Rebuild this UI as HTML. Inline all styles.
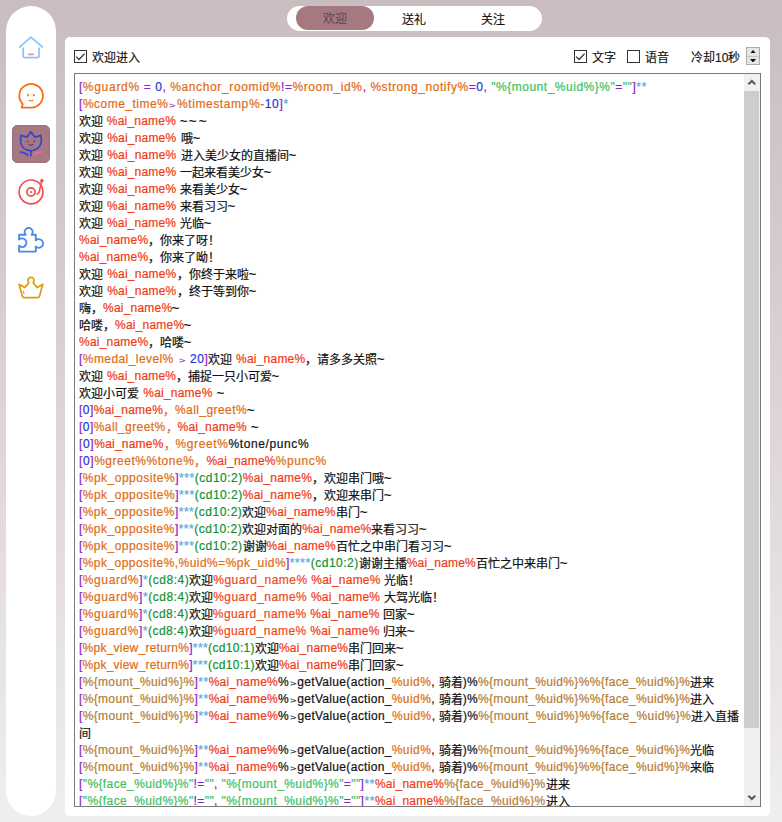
<!DOCTYPE html>
<html lang="zh-CN"><head><meta charset="utf-8">
<style>
html,body{margin:0;padding:0;}
body{width:782px;height:822px;overflow:hidden;position:relative;
 background:linear-gradient(to bottom,#c9bdc0 0%,#ddd4d6 50%,#f0eeee 100%);
 font-family:"Liberation Sans",sans-serif;color:#111;}
.side{position:absolute;left:6px;top:6px;width:50px;height:810px;border-radius:25px;background:#fff;}
.ico{position:absolute;left:0;width:50px;height:48px;}
.ico svg{position:absolute;left:13px;top:12px;width:24px;height:24px;overflow:visible}
.sel{position:absolute;left:6px;top:119px;width:36px;height:36px;border-radius:5px;background:#a67880;border:1px solid #9f717a}
.tabs{position:absolute;left:287px;top:6px;width:255px;height:25px;border-radius:12.5px;background:#fff;}
.tab{position:absolute;top:1px;height:25px;line-height:26px;font-size:12px;text-align:center;color:#111;-webkit-text-stroke:0.15px currentColor}
.tab.act{background:#a67880;border-radius:12px;top:0;height:24px;line-height:27px;color:#55465a;-webkit-text-stroke:0}
.panel{position:absolute;left:65px;top:37px;width:705px;height:779px;border-radius:5px;background:#fff;}
.cb{position:absolute;width:11px;height:11px;border:1px solid #333;background:#fff;}
.cb svg{position:absolute;left:0;top:0}
.lbl{position:absolute;font-size:12px;line-height:16px;white-space:nowrap;color:#111;-webkit-text-stroke:0.15px #111}
.ta{position:absolute;left:9px;top:36px;width:685px;height:732px;border:1px solid #7a7a7a;background:#fff;overflow:hidden}
.txt{position:absolute;left:4px;top:5px;width:665px;font-size:12px;line-height:17px;}
.ln{white-space:nowrap;height:17px;letter-spacing:0px}
.ln b.t{font-weight:normal;margin-right:2px;display:inline-block;transform:scale(1.1,1.15)}
.ln b.gt{font-weight:normal;display:inline-block;transform:translate(0.6px,1px) scale(0.9,0.66);margin-right:1px}
.ln i{font-style:normal;letter-spacing:0;position:relative;top:1px}
.sb{position:absolute;left:669px;top:0;width:16px;height:732px;background:#f0f0f0}
.thumb{position:absolute;left:0;top:17px;width:15px;height:637px;background:#cdcdcd}
.p{color:#8c22c8}.o{color:#de6c14}.r{color:#f03a14}.r2{color:#ec4a1c}.b{color:#1c34d8}.g{color:#40c064}.d{color:#109030}.l{color:#58a8d8}.y{color:#b47c34}.k{color:#111}
.ln span{-webkit-text-stroke:0.2px currentColor}
.spin{position:absolute;left:681px;top:10px;width:12px;height:16px;border:1px solid #adadad;background:#e6e6e6}
</style></head><body>
<div class="side">
 <div class="ico" style="top:18px">
  <svg viewBox="0 0 24 24"><path d="M0.7 11 L12 1.1 L23.3 11" fill="none" stroke="#8cc4fa" stroke-width="1.75" stroke-linejoin="round" stroke-linecap="round"/><path d="M4.2 11.6 V19.8 Q4.2 21.5 5.9 21.5 H18.3 Q20 21.5 20 19.8 V11.6" fill="none" stroke="#8cc4fa" stroke-width="1.75"/><path d="M9.6 18.4 H14.4" stroke="#f48aaa" stroke-width="1.6" stroke-linecap="round"/></svg>
 </div>
 <div class="ico" style="top:66px">
  <svg viewBox="0 0 24 24"><path d="M12.15 23.55 H2.6 L3.8 20.1 A11.8 11.8 0 1 1 12.15 23.55 Z" fill="none" stroke="#fa6a10" stroke-width="1.75" stroke-linejoin="round"/><ellipse cx="9.1" cy="11.2" rx="0.8" ry="1.4" fill="#fa6a10"/><ellipse cx="14.9" cy="11.2" rx="0.8" ry="1.4" fill="#fa6a10"/><path d="M10 16.3 Q12 17.6 14 16.3" fill="none" stroke="#fa6a10" stroke-width="1.1" stroke-linecap="round"/></svg>
 </div>
 <div class="sel"></div>
 <div class="ico" style="top:114px">
  <svg viewBox="0 0 24 24"><path d="M11.8 18.6 V24.4" stroke="#3a44d4" stroke-width="1.75"/><path d="M11.8 -0.3 L15.9 5.1 L21.9 3.4 C22.4 6 22.4 8 22.2 10 C21.5 15 17.5 18.6 11.8 18.6 C6.1 18.6 2.3 15 1.7 10 C1.5 8 1.5 6 1.9 3.4 L8.1 5.1 Z" fill="none" stroke="#3a44d4" stroke-width="1.75" stroke-linejoin="round"/><ellipse cx="8.7" cy="9.4" rx="0.8" ry="1.1" fill="#3a44d4"/><ellipse cx="15.3" cy="9.4" rx="0.8" ry="1.1" fill="#3a44d4"/><path d="M10.1 12.4 Q12 14.4 13.9 12.4" fill="none" stroke="#3a44d4" stroke-width="1.3" stroke-linecap="round"/><path d="M1.3 20.1 Q6 20.3 8.7 23.2" fill="none" stroke="#3a44d4" stroke-width="1.75" stroke-linecap="round"/><path d="M14.7 23.2 Q17.5 20.3 22.7 19.9" fill="none" stroke="#f06c94" stroke-width="1.75" stroke-linecap="round"/></svg>
 </div>
 <div class="ico" style="top:162px">
  <svg viewBox="0 0 24 24"><circle cx="12.05" cy="11.9" r="11.9" fill="none" stroke="#f24c4c" stroke-width="1.7"/><circle cx="12" cy="12" r="4.1" fill="none" stroke="#f24c4c" stroke-width="1.7"/><circle cx="12" cy="12" r="1" fill="#f24c4c"/><path d="M22.9 0.7 L21.5 5.7 L20.3 12 L18 14.3" fill="none" stroke="#f24c4c" stroke-width="1.5" stroke-linecap="round" stroke-linejoin="round"/><circle cx="22.9" cy="0.7" r="1.8" fill="#f24c4c"/></svg>
 </div>
 <div class="ico" style="top:210px">
  <svg viewBox="0 0 24 24"><path d="M0.1 6.7 H6.7 A4 4 0 1 1 12.6 6.7 H16.8 V12.3 A4.3 4.3 0 1 1 16.8 18.6 V23.6 H0.1 V17.8 A4.3 4.3 0 1 0 0.1 11.6 Z" fill="none" stroke="#4a88ea" stroke-width="1.9" stroke-linejoin="round"/></svg>
 </div>
 <div class="ico" style="top:258px">
  <svg viewBox="0 0 24 24"><path d="M0.1 8.3 L5.6 11.6 L9.9 6.8 A3.1 3.1 0 1 1 14.1 6.8 L18.2 11.6 L23.8 8.3 L20.5 20.3 Q20.1 21.7 18.8 21.7 H5 Q3.7 21.7 3.3 20.3 Z" fill="none" stroke="#daa010" stroke-width="1.75" stroke-linejoin="round"/><path d="M4.3 15.2 L5 17.6" stroke="#daa010" stroke-width="1.1" stroke-linecap="round"/></svg>
 </div>
</div>

<div class="tabs">
 <div class="tab act" style="left:9px;width:78px">欢迎</div>
 <div class="tab" style="left:87px;width:80px">送礼</div>
 <div class="tab" style="left:166px;width:80px">关注</div>
</div>

<div class="panel">
 <div class="cb" style="left:9px;top:13px"><svg width="11" height="11" viewBox="0 0 11 11"><path d="M1.2 5.6 L4 8.5 L9.6 2.6" fill="none" stroke="#333" stroke-width="1.3"/></svg></div>
 <div class="lbl" style="left:27px;top:13px">欢迎进入</div>
 <div class="cb" style="left:509px;top:13px"><svg width="11" height="11" viewBox="0 0 11 11"><path d="M1.2 5.6 L4 8.5 L9.6 2.6" fill="none" stroke="#333" stroke-width="1.3"/></svg></div>
 <div class="lbl" style="left:527px;top:13px">文字</div>
 <div class="cb" style="left:562px;top:13px"></div>
 <div class="lbl" style="left:580px;top:13px">语音</div>
 <div class="lbl" style="left:626px;top:13px">冷却10秒</div>
 <div class="spin">
   <div style="position:absolute;left:0;top:8px;width:12px;height:1px;background:#c8c8c8"></div>
   <svg style="position:absolute;left:2.5px;top:1.8px" width="6" height="3.5"><path d="M0 3.5 L3 0 L6 3.5 Z" fill="#111"/></svg>
   <svg style="position:absolute;left:2.5px;top:10.8px" width="6" height="3.5"><path d="M0 0 L3 3.5 L6 0 Z" fill="#111"/></svg>
 </div>
 <div class="ta">
  <div class="txt">
<div class="ln"><span class="p"><span style="letter-spacing:0.51px">[</span></span><span class="o"><span style="letter-spacing:0.71px">%guard%</span></span><span class="p"><span style="letter-spacing:0.52px"> = </span></span><span class="b"><span style="letter-spacing:0.58px">0</span></span><span class="p"><span style="letter-spacing:0.52px">,</span></span><span class="o"><span style="letter-spacing:0.63px"> %anchor_roomid%</span></span><span class="p"><span style="letter-spacing:0.52px">!=</span></span><span class="o"><span style="letter-spacing:0.61px">%room_id%</span></span><span class="p"><span style="letter-spacing:0.52px">,</span></span><span class="o"><span style="letter-spacing:0.55px"> %strong_notify%</span></span><span class="p"><span style="letter-spacing:0.52px">=</span></span><span class="b"><span style="letter-spacing:0.58px">0</span></span><span class="p"><span style="letter-spacing:0.52px">, </span></span><span class="g"><span style="letter-spacing:0.52px">&quot;%{mount_%uid%}%&quot;</span></span><span class="p"><span style="letter-spacing:0.52px">=</span></span><span class="g"><span style="letter-spacing:0.52px">&quot;&quot;</span></span><span class="p"><span style="letter-spacing:0.58px">]</span></span><span class="l"><span style="letter-spacing:0.69px">**</span></span></div>
<div class="ln"><span class="p"><span style="letter-spacing:0.57px">[</span></span><span class="o"><span style="letter-spacing:0.49px">%come_time%</span></span><span class="p"><span style="letter-spacing:0.62px"><b class="gt">&gt;</b></span></span><span class="o"><span style="letter-spacing:0.59px">%timestamp%-</span></span><span class="b"><span style="letter-spacing:0.65px">10</span></span><span class="p"><span style="letter-spacing:0.65px">]</span></span><span class="l"><span style="letter-spacing:0.76px">*</span></span></div>
<div class="ln"><span class="k"><i>欢迎</i><span style="letter-spacing:0.41px"> </span></span><span class="r"><span style="letter-spacing:0.21px">%ai_name%</span></span><span class="k"><span style="letter-spacing:0.41px"> <b class="t">~</b><b class="t">~</b><b class="t">~</b></span></span></div>
<div class="ln"><span class="k"><i>欢迎</i><span style="letter-spacing:0.78px"> </span></span><span class="r"><span style="letter-spacing:0.21px">%ai_name%</span></span><span class="k"><span style="letter-spacing:0.78px"> </span><i>哦</i><span style="letter-spacing:0.78px"><b class="t">~</b></span></span></div>
<div class="ln"><span class="k"><i>欢迎</i><span style="letter-spacing:0.85px"> </span></span><span class="r"><span style="letter-spacing:0.21px">%ai_name%</span></span><span class="k"><span style="letter-spacing:0.85px"> </span><i>进入美少女的直播间</i><span style="letter-spacing:0.85px"><b class="t">~</b></span></span></div>
<div class="ln"><span class="k"><i>欢迎</i><span style="letter-spacing:0.68px"> </span></span><span class="r"><span style="letter-spacing:0.21px">%ai_name%</span></span><span class="k"><span style="letter-spacing:0.68px"> </span><i>一起来看美少女</i><span style="letter-spacing:0.68px"><b class="t">~</b></span></span></div>
<div class="ln"><span class="k"><i>欢迎</i><span style="letter-spacing:0.75px"> </span></span><span class="r"><span style="letter-spacing:0.21px">%ai_name%</span></span><span class="k"><span style="letter-spacing:0.75px"> </span><i>来看美少女</i><span style="letter-spacing:0.75px"><b class="t">~</b></span></span></div>
<div class="ln"><span class="k"><i>欢迎</i><span style="letter-spacing:0.75px"> </span></span><span class="r"><span style="letter-spacing:0.21px">%ai_name%</span></span><span class="k"><span style="letter-spacing:0.75px"> </span><i>来看习习</i><span style="letter-spacing:0.75px"><b class="t">~</b></span></span></div>
<div class="ln"><span class="k"><i>欢迎</i><span style="letter-spacing:0.62px"> </span></span><span class="r"><span style="letter-spacing:0.21px">%ai_name%</span></span><span class="k"><span style="letter-spacing:0.62px"> </span><i>光临</i><span style="letter-spacing:0.62px"><b class="t">~</b></span></span></div>
<div class="ln"><span class="r"><span style="letter-spacing:0.21px">%ai_name%</span></span><span class="k"><i>，你来了呀！</i></span></div>
<div class="ln"><span class="r"><span style="letter-spacing:0.21px">%ai_name%</span></span><span class="k"><i>，你来了呦！</i></span></div>
<div class="ln"><span class="k"><i>欢迎</i><span style="letter-spacing:0.90px"> </span></span><span class="r"><span style="letter-spacing:0.21px">%ai_name%</span></span><span class="k"><i>，你终于来啦</i><span style="letter-spacing:0.90px"><b class="t">~</b></span></span></div>
<div class="ln"><span class="k"><i>欢迎</i><span style="letter-spacing:0.90px"> </span></span><span class="r"><span style="letter-spacing:0.21px">%ai_name%</span></span><span class="k"><i>，终于等到你</i><span style="letter-spacing:0.90px"><b class="t">~</b></span></span></div>
<div class="ln"><span class="k"><i>嗨，</i></span><span class="r"><span style="letter-spacing:0.21px">%ai_name%</span></span><span class="k"><span style="letter-spacing:1.75px"><b class="t">~</b></span></span></div>
<div class="ln"><span class="k"><i>哈喽，</i></span><span class="r"><span style="letter-spacing:0.21px">%ai_name%</span></span><span class="k"><span style="letter-spacing:1.45px"><b class="t">~</b></span></span></div>
<div class="ln"><span class="r"><span style="letter-spacing:0.21px">%ai_name%</span></span><span class="k"><i>，哈喽</i><span style="letter-spacing:1.45px"><b class="t">~</b></span></span></div>
<div class="ln"><span class="p"><span style="letter-spacing:0.48px">[</span></span><span class="o"><span style="letter-spacing:0.42px">%medal_level%</span></span><span class="p"><span style="letter-spacing:0.51px"> <b class="gt">&gt;</b> </span></span><span class="b"><span style="letter-spacing:0.55px">20</span></span><span class="p"><span style="letter-spacing:0.55px">]</span></span><span class="k"><i>欢迎</i><span style="letter-spacing:0.49px"> </span></span><span class="r"><span style="letter-spacing:0.21px">%ai_name%</span></span><span class="k"><i>，请多多关照</i><span style="letter-spacing:0.49px"><b class="t">~</b></span></span></div>
<div class="ln"><span class="k"><i>欢迎</i><span style="letter-spacing:0.65px"> </span></span><span class="r"><span style="letter-spacing:0.21px">%ai_name%</span></span><span class="k"><i>，捕捉一只小可爱</i><span style="letter-spacing:0.65px"><b class="t">~</b></span></span></div>
<div class="ln"><span class="k"><i>欢迎小可爱</i><span style="letter-spacing:0.92px"> </span></span><span class="r"><span style="letter-spacing:0.21px">%ai_name%</span></span><span class="k"><span style="letter-spacing:0.92px"> <b class="t">~</b></span></span></div>
<div class="ln"><span class="p"><span style="letter-spacing:0.42px">[</span></span><span class="b"><span style="letter-spacing:0.49px">0</span></span><span class="p"><span style="letter-spacing:0.49px">]</span></span><span class="r"><span style="letter-spacing:0.21px">%ai_name%</span></span><span class="o"><i>，</i><span style="letter-spacing:0.42px">%all_greet%</span></span><span class="k"><span style="letter-spacing:0.44px"><b class="t">~</b></span></span></div>
<div class="ln"><span class="p"><span style="letter-spacing:0.41px">[</span></span><span class="b"><span style="letter-spacing:0.48px">0</span></span><span class="p"><span style="letter-spacing:0.48px">]</span></span><span class="o"><span style="letter-spacing:0.40px">%all_greet%</span><i>，</i></span><span class="r"><span style="letter-spacing:0.21px">%ai_name%</span></span><span class="k"><span style="letter-spacing:0.42px"> <b class="t">~</b></span></span></div>
<div class="ln"><span class="p"><span style="letter-spacing:0.59px">[</span></span><span class="b"><span style="letter-spacing:0.66px">0</span></span><span class="p"><span style="letter-spacing:0.66px">]</span></span><span class="r"><span style="letter-spacing:0.21px">%ai_name%</span></span><span class="o"><i>，</i><span style="letter-spacing:0.60px">%greet%</span></span><span class="k"><span style="letter-spacing:0.61px">%tone/punc%</span></span></div>
<div class="ln"><span class="p"><span style="letter-spacing:0.54px">[</span></span><span class="b"><span style="letter-spacing:0.61px">0</span></span><span class="p"><span style="letter-spacing:0.61px">]</span></span><span class="o"><span style="letter-spacing:0.53px">%greet%%tone%</span><i>，</i></span><span class="r"><span style="letter-spacing:0.21px">%ai_name%</span></span><span class="o"><span style="letter-spacing:0.61px">%punc%</span></span></div>
<div class="ln"><span class="p"><span style="letter-spacing:0.39px">[</span></span><span class="o"><span style="letter-spacing:0.49px">%pk_opposite%</span></span><span class="p"><span style="letter-spacing:0.46px">]</span></span><span class="l"><span style="letter-spacing:0.57px">***</span></span><span class="d"><span style="letter-spacing:0.51px">(cd10:2)</span></span><span class="r"><span style="letter-spacing:0.21px">%ai_name%</span></span><span class="k"><i>，欢迎串门哦</i><span style="letter-spacing:0.40px"><b class="t">~</b></span></span></div>
<div class="ln"><span class="p"><span style="letter-spacing:0.39px">[</span></span><span class="o"><span style="letter-spacing:0.49px">%pk_opposite%</span></span><span class="p"><span style="letter-spacing:0.46px">]</span></span><span class="l"><span style="letter-spacing:0.57px">***</span></span><span class="d"><span style="letter-spacing:0.51px">(cd10:2)</span></span><span class="r"><span style="letter-spacing:0.21px">%ai_name%</span></span><span class="k"><i>，欢迎来串门</i><span style="letter-spacing:0.40px"><b class="t">~</b></span></span></div>
<div class="ln"><span class="p"><span style="letter-spacing:0.37px">[</span></span><span class="o"><span style="letter-spacing:0.47px">%pk_opposite%</span></span><span class="p"><span style="letter-spacing:0.44px">]</span></span><span class="l"><span style="letter-spacing:0.55px">***</span></span><span class="d"><span style="letter-spacing:0.49px">(cd10:2)</span></span><span class="k"><i>欢迎</i></span><span class="r"><span style="letter-spacing:0.21px">%ai_name%</span></span><span class="k"><i>串门</i><span style="letter-spacing:0.38px"><b class="t">~</b></span></span></div>
<div class="ln"><span class="p"><span style="letter-spacing:0.36px">[</span></span><span class="o"><span style="letter-spacing:0.47px">%pk_opposite%</span></span><span class="p"><span style="letter-spacing:0.43px">]</span></span><span class="l"><span style="letter-spacing:0.55px">***</span></span><span class="d"><span style="letter-spacing:0.48px">(cd10:2)</span></span><span class="k"><i>欢迎对面的</i></span><span class="r"><span style="letter-spacing:0.21px">%ai_name%</span></span><span class="k"><i>来看习习</i><span style="letter-spacing:0.38px"><b class="t">~</b></span></span></div>
<div class="ln"><span class="p"><span style="letter-spacing:0.38px">[</span></span><span class="o"><span style="letter-spacing:0.48px">%pk_opposite%</span></span><span class="p"><span style="letter-spacing:0.45px">]</span></span><span class="l"><span style="letter-spacing:0.57px">***</span></span><span class="d"><span style="letter-spacing:0.50px">(cd10:2)</span></span><span class="k"><i>谢谢</i></span><span class="r"><span style="letter-spacing:0.21px">%ai_name%</span></span><span class="k"><i>百忙之中串门看习习</i><span style="letter-spacing:0.39px"><b class="t">~</b></span></span></div>
<div class="ln"><span class="p"><span style="letter-spacing:0.37px">[</span></span><span class="o"><span style="letter-spacing:0.46px">%pk_opposite%,%uid%=%pk_uid%</span></span><span class="p"><span style="letter-spacing:0.44px">]</span></span><span class="l"><span style="letter-spacing:0.56px">****</span></span><span class="d"><span style="letter-spacing:0.49px">(cd10:2)</span></span><span class="k"><i>谢谢主播</i></span><span class="r"><span style="letter-spacing:0.21px">%ai_name%</span></span><span class="k"><i>百忙之中来串门</i><span style="letter-spacing:0.39px"><b class="t">~</b></span></span></div>
<div class="ln"><span class="p"><span style="letter-spacing:0.42px">[</span></span><span class="o"><span style="letter-spacing:0.62px">%guard%</span></span><span class="p"><span style="letter-spacing:0.49px">]</span></span><span class="l"><span style="letter-spacing:0.61px">*</span></span><span class="d"><span style="letter-spacing:0.53px">(cd8:4)</span></span><span class="k"><i>欢迎</i></span><span class="r2"><span style="letter-spacing:0.46px">%guard_name%</span></span><span class="k"><span style="letter-spacing:0.44px"> </span></span><span class="r"><span style="letter-spacing:0.21px">%ai_name%</span></span><span class="k"><span style="letter-spacing:0.44px"> </span><i>光临！</i></span></div>
<div class="ln"><span class="p"><span style="letter-spacing:0.41px">[</span></span><span class="o"><span style="letter-spacing:0.61px">%guard%</span></span><span class="p"><span style="letter-spacing:0.48px">]</span></span><span class="l"><span style="letter-spacing:0.60px">*</span></span><span class="d"><span style="letter-spacing:0.52px">(cd8:4)</span></span><span class="k"><i>欢迎</i></span><span class="r2"><span style="letter-spacing:0.44px">%guard_name%</span></span><span class="k"><span style="letter-spacing:0.42px"> </span></span><span class="r"><span style="letter-spacing:0.21px">%ai_name%</span></span><span class="k"><span style="letter-spacing:0.42px"> </span><i>大驾光临！</i></span></div>
<div class="ln"><span class="p"><span style="letter-spacing:0.39px">[</span></span><span class="o"><span style="letter-spacing:0.59px">%guard%</span></span><span class="p"><span style="letter-spacing:0.46px">]</span></span><span class="l"><span style="letter-spacing:0.58px">*</span></span><span class="d"><span style="letter-spacing:0.50px">(cd8:4)</span></span><span class="k"><i>欢迎</i></span><span class="r2"><span style="letter-spacing:0.42px">%guard_name%</span></span><span class="k"><span style="letter-spacing:0.41px"> </span></span><span class="r"><span style="letter-spacing:0.21px">%ai_name%</span></span><span class="k"><span style="letter-spacing:0.41px"> </span><i>回家</i><span style="letter-spacing:0.41px"><b class="t">~</b></span></span></div>
<div class="ln"><span class="p"><span style="letter-spacing:0.39px">[</span></span><span class="o"><span style="letter-spacing:0.59px">%guard%</span></span><span class="p"><span style="letter-spacing:0.46px">]</span></span><span class="l"><span style="letter-spacing:0.58px">*</span></span><span class="d"><span style="letter-spacing:0.50px">(cd8:4)</span></span><span class="k"><i>欢迎</i></span><span class="r2"><span style="letter-spacing:0.42px">%guard_name%</span></span><span class="k"><span style="letter-spacing:0.41px"> </span></span><span class="r"><span style="letter-spacing:0.21px">%ai_name%</span></span><span class="k"><span style="letter-spacing:0.41px"> </span><i>归来</i><span style="letter-spacing:0.41px"><b class="t">~</b></span></span></div>
<div class="ln"><span class="p"><span style="letter-spacing:0.24px">[</span></span><span class="o"><span style="letter-spacing:0.24px">%pk_view_return%</span></span><span class="p"><span style="letter-spacing:0.31px">]</span></span><span class="l"><span style="letter-spacing:0.42px">***</span></span><span class="d"><span style="letter-spacing:0.36px">(cd10:1)</span></span><span class="k"><i>欢迎</i></span><span class="r"><span style="letter-spacing:0.21px">%ai_name%</span></span><span class="k"><i>串门回来</i><span style="letter-spacing:0.25px"><b class="t">~</b></span></span></div>
<div class="ln"><span class="p"><span style="letter-spacing:0.24px">[</span></span><span class="o"><span style="letter-spacing:0.24px">%pk_view_return%</span></span><span class="p"><span style="letter-spacing:0.31px">]</span></span><span class="l"><span style="letter-spacing:0.42px">***</span></span><span class="d"><span style="letter-spacing:0.36px">(cd10:1)</span></span><span class="k"><i>欢迎</i></span><span class="r"><span style="letter-spacing:0.21px">%ai_name%</span></span><span class="k"><i>串门回家</i><span style="letter-spacing:0.25px"><b class="t">~</b></span></span></div>
<div class="ln"><span class="p"><span style="letter-spacing:0.33px">[</span></span><span class="y"><span style="letter-spacing:0.34px">%{mount_%uid%}%</span></span><span class="p"><span style="letter-spacing:0.40px">]</span></span><span class="l"><span style="letter-spacing:0.52px">**</span></span><span class="r"><span style="letter-spacing:0.21px">%ai_name%</span></span><span class="k"><span style="letter-spacing:0.33px">%<b class="gt">&gt;</b>getValue(action_</span></span><span class="o"><span style="letter-spacing:0.44px">%uid%</span></span><span class="k"><span style="letter-spacing:0.34px">, </span><i>骑着</i><span style="letter-spacing:0.33px">)%</span></span><span class="y"><span style="letter-spacing:0.33px">%{mount_%uid%}%%{face_%uid%}%</span></span><span class="k"><i>进来</i></span></div>
<div class="ln"><span class="p"><span style="letter-spacing:0.33px">[</span></span><span class="y"><span style="letter-spacing:0.34px">%{mount_%uid%}%</span></span><span class="p"><span style="letter-spacing:0.40px">]</span></span><span class="l"><span style="letter-spacing:0.52px">**</span></span><span class="r"><span style="letter-spacing:0.21px">%ai_name%</span></span><span class="k"><span style="letter-spacing:0.33px">%<b class="gt">&gt;</b>getValue(action_</span></span><span class="o"><span style="letter-spacing:0.44px">%uid%</span></span><span class="k"><span style="letter-spacing:0.34px">, </span><i>骑着</i><span style="letter-spacing:0.33px">)%</span></span><span class="y"><span style="letter-spacing:0.33px">%{mount_%uid%}%%{face_%uid%}%</span></span><span class="k"><i>进入</i></span></div>
<div class="ln"><span class="p"><span style="letter-spacing:0.33px">[</span></span><span class="y"><span style="letter-spacing:0.35px">%{mount_%uid%}%</span></span><span class="p"><span style="letter-spacing:0.40px">]</span></span><span class="l"><span style="letter-spacing:0.52px">**</span></span><span class="r"><span style="letter-spacing:0.21px">%ai_name%</span></span><span class="k"><span style="letter-spacing:0.34px">%<b class="gt">&gt;</b>getValue(action_</span></span><span class="o"><span style="letter-spacing:0.45px">%uid%</span></span><span class="k"><span style="letter-spacing:0.35px">, </span><i>骑着</i><span style="letter-spacing:0.33px">)%</span></span><span class="y"><span style="letter-spacing:0.34px">%{mount_%uid%}%%{face_%uid%}%</span></span><span class="k"><i>进入直播</i></span></div>
<div class="ln"><span class="k"><i>间</i></span></div>
<div class="ln"><span class="p"><span style="letter-spacing:0.33px">[</span></span><span class="y"><span style="letter-spacing:0.34px">%{mount_%uid%}%</span></span><span class="p"><span style="letter-spacing:0.40px">]</span></span><span class="l"><span style="letter-spacing:0.52px">**</span></span><span class="r"><span style="letter-spacing:0.21px">%ai_name%</span></span><span class="k"><span style="letter-spacing:0.33px">%<b class="gt">&gt;</b>getValue(action_</span></span><span class="o"><span style="letter-spacing:0.44px">%uid%</span></span><span class="k"><span style="letter-spacing:0.34px">, </span><i>骑着</i><span style="letter-spacing:0.33px">)%</span></span><span class="y"><span style="letter-spacing:0.33px">%{mount_%uid%}%%{face_%uid%}%</span></span><span class="k"><i>光临</i></span></div>
<div class="ln"><span class="p"><span style="letter-spacing:0.33px">[</span></span><span class="y"><span style="letter-spacing:0.34px">%{mount_%uid%}%</span></span><span class="p"><span style="letter-spacing:0.40px">]</span></span><span class="l"><span style="letter-spacing:0.52px">**</span></span><span class="r"><span style="letter-spacing:0.21px">%ai_name%</span></span><span class="k"><span style="letter-spacing:0.33px">%<b class="gt">&gt;</b>getValue(action_</span></span><span class="o"><span style="letter-spacing:0.44px">%uid%</span></span><span class="k"><span style="letter-spacing:0.34px">, </span><i>骑着</i><span style="letter-spacing:0.33px">)%</span></span><span class="y"><span style="letter-spacing:0.33px">%{mount_%uid%}%%{face_%uid%}%</span></span><span class="k"><i>来临</i></span></div>
<div class="ln"><span class="p"><span style="letter-spacing:0.40px">[</span></span><span class="g"><span style="letter-spacing:0.39px">&quot;%{face_%uid%}%&quot;</span></span><span class="p"><span style="letter-spacing:0.41px">!=</span></span><span class="g"><span style="letter-spacing:0.41px">&quot;&quot;</span></span><span class="p"><span style="letter-spacing:0.41px">, </span></span><span class="g"><span style="letter-spacing:0.41px">&quot;%{mount_%uid%}%&quot;</span></span><span class="p"><span style="letter-spacing:0.41px">=</span></span><span class="g"><span style="letter-spacing:0.41px">&quot;&quot;</span></span><span class="p"><span style="letter-spacing:0.47px">]</span></span><span class="l"><span style="letter-spacing:0.58px">**</span></span><span class="r"><span style="letter-spacing:0.21px">%ai_name%</span></span><span class="y"><span style="letter-spacing:0.39px">%{face_%uid%}%</span></span><span class="k"><i>进来</i></span></div>
<div class="ln"><span class="p"><span style="letter-spacing:0.40px">[</span></span><span class="g"><span style="letter-spacing:0.39px">&quot;%{face_%uid%}%&quot;</span></span><span class="p"><span style="letter-spacing:0.41px">!=</span></span><span class="g"><span style="letter-spacing:0.41px">&quot;&quot;</span></span><span class="p"><span style="letter-spacing:0.41px">, </span></span><span class="g"><span style="letter-spacing:0.41px">&quot;%{mount_%uid%}%&quot;</span></span><span class="p"><span style="letter-spacing:0.41px">=</span></span><span class="g"><span style="letter-spacing:0.41px">&quot;&quot;</span></span><span class="p"><span style="letter-spacing:0.47px">]</span></span><span class="l"><span style="letter-spacing:0.58px">**</span></span><span class="r"><span style="letter-spacing:0.21px">%ai_name%</span></span><span class="y"><span style="letter-spacing:0.39px">%{face_%uid%}%</span></span><span class="k"><i>进入</i></span></div>
  </div>
  <div class="sb">
   <svg style="position:absolute;left:3px;top:5px" width="10" height="7"><path d="M1.4 5.3 L4.8 1.9 L8.2 5.3" fill="none" stroke="#5a5a5a" stroke-width="2.1"/></svg>
   <div class="thumb"></div>
   <svg style="position:absolute;left:3px;top:720px" width="10" height="7"><path d="M1.4 1.7 L4.8 5.1 L8.2 1.7" fill="none" stroke="#5a5a5a" stroke-width="2.1"/></svg>
  </div>
 </div>
</div>
</body></html>
